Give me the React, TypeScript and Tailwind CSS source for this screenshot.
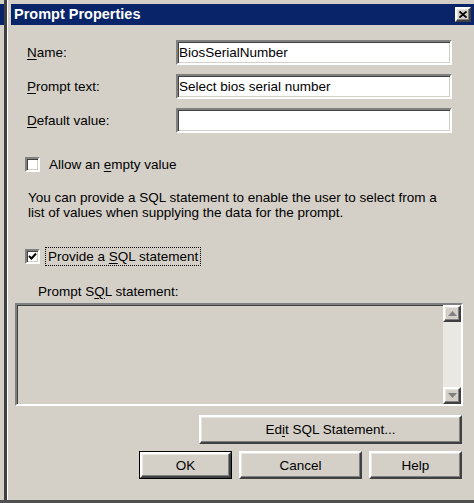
const sunken =
  "border-2 border-t-[#808080] border-l-[#808080] border-b-white border-r-white shadow-[inset_1px_1px_0_#404040,inset_-1px_-1px_0_#d4d0c8]";
const raised =
  "border-2 border-t-white border-l-white border-b-[#404040] border-r-[#404040] shadow-[inset_-1px_-1px_0_#808080,inset_1px_1px_0_#e8e6e0]";

function Field({ label, hot, value }: { label: string; hot: string; value: string }) {
  const rest = label.slice(hot.length);
  return (
    <div className="flex items-center h-[25px]">
      <div className="w-[166px] pl-[17px]">
        <span className="underline underline-offset-2">{hot}</span>
        {rest}
      </div>
      <div className={`${sunken} w-[276px] h-[25px] bg-white flex items-center pl-[1px]`}>{value}</div>
    </div>
  );
}

function Check({ checked }: { checked?: boolean }) {
  return (
    <div className={`${sunken} w-[15px] h-[15px] bg-white flex items-center justify-center shrink-0`}>
      {checked && (
        <svg width="9" height="9" viewBox="0 0 9 9">
          <path d="M1 4 L3.5 6.5 L8 1.5" stroke="#000" strokeWidth="2" fill="none" />
        </svg>
      )}
    </div>
  );
}

function Arrow({ up }: { up?: boolean }) {
  return (
    <div className={`${raised} h-[17px] bg-[#d4d0c8] flex items-center justify-center`}>
      <svg width="9" height="5" viewBox="0 0 9 5">
        <path d={up ? "M0 5 L4.5 0 L9 5 Z" : "M0 0 L4.5 5 L9 0 Z"} fill="#808080" />
      </svg>
    </div>
  );
}

export default function App() {
  return (
    <div className="w-[474px] h-[503px] bg-[#d4d0c8] overflow-hidden flex flex-col font-['Liberation_Sans',Arial,sans-serif] text-[13.5px] leading-[15px] text-black">
      <div className="flex flex-1 min-h-0">
        {/* window behind */}
        <div className="w-[4px] flex flex-col">
          <div className="mt-[4px] h-[21px] bg-[#0a246a]" />
        </div>
        <div className="w-[3px] bg-[#404040]" />
        <div className="w-[1px] bg-white" />
        <div className="w-[2px]" />

        <div className="flex-1 flex flex-col">
          <div className="mt-[4px] ml-[1px] h-[21px] bg-[#0a246a] flex items-center justify-between pl-[3px] pr-[3px]">
            <span className="text-white font-bold text-[14.5px]">Prompt Properties</span>
            <div className={`${raised} w-[16px] h-[15px] bg-[#d4d0c8] flex items-center justify-center`}>
              <svg width="8" height="7" viewBox="0 0 8 7">
                <path d="M0.5 0.5 L7.5 6.5 M7.5 0.5 L0.5 6.5" stroke="#000" strokeWidth="1.8" />
              </svg>
            </div>
          </div>

          <div className="mt-[15px] flex flex-col gap-[9px]">
            <Field label="Name:" hot="N" value="BiosSerialNumber" />
            <Field label="Prompt text:" hot="P" value="Select bios serial number" />
            <Field label="Default value:" hot="D" value="" />
          </div>

          <div className="mt-[24px] ml-[15px] flex items-center gap-[9px]">
            <Check />
            <span>
              Allow an <span className="underline underline-offset-2">e</span>mpty value
            </span>
          </div>

          <p className="mt-[18px] pl-[18px]">
            You can provide a SQL statement to enable the user to select from a
            <br />
            list of values when supplying the data for the prompt.
          </p>

          <div className="mt-[27px] ml-[15px] flex items-center gap-[5px]">
            <Check checked />
            <span className="inline-block border border-dotted border-black px-[2px] py-[1px]">
              Provide a <span className="underline underline-offset-2">S</span>QL statement
            </span>
          </div>

          <div className="mt-[18px] pl-[28px]">
            Prompt S<span className="underline underline-offset-2">Q</span>L statement:
          </div>

          <div className={`${sunken} mt-[4px] ml-[5px] w-[448px] h-[103px] bg-[#d4d0c8] flex justify-end`}>
            <div className="w-[18px] flex flex-col">
              <Arrow up />
              <div className="flex-1 bg-[#eae8e3]" />
              <Arrow />
            </div>
          </div>

          <div className={`${raised} mt-[9px] ml-[189px] w-[263px] h-[29px] flex items-center justify-center`}>
            <span>
              Ed<span className="underline underline-offset-2">i</span>t SQL Statement...
            </span>
          </div>

          <div className="mt-[7px] ml-[129px] flex gap-[7px]">
            <div className="w-[93px] h-[28px] border border-black">
              <div className={`${raised} h-full flex items-center justify-center`}>OK</div>
            </div>
            <div className={`${raised} w-[123px] h-[28px] flex items-center justify-center`}>Cancel</div>
            <div className={`${raised} w-[93px] h-[28px] flex items-center justify-center`}>Help</div>
          </div>
        </div>
      </div>
      <div className="h-[3px] bg-[#505050]" />
    </div>
  );
}
